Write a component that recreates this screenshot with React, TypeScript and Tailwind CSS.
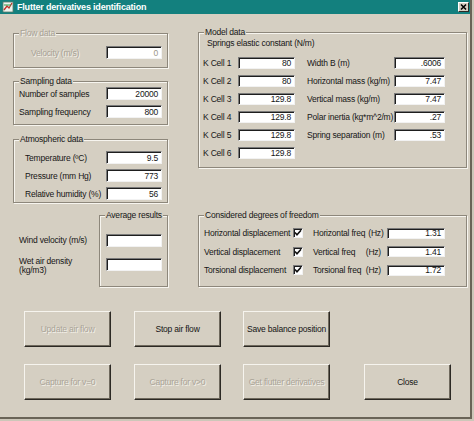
import clsx from "clsx";

function Field({ v, className, dim }: { v?: string; className: string; dim?: boolean }) {
  return (
    <div
      className={clsx(
        "shrink-0 bg-white border border-t-[#7a7a7a] border-l-[#7a7a7a] border-b-[#f2f2f2] border-r-[#f2f2f2] shadow-[inset_1px_1px_0_#1e1e1e] flex items-center justify-end pr-[3px]",
        dim ? "text-[#9c978b]" : "text-[#161616]",
        className
      )}
    >
      {v}
    </div>
  );
}

function Btn({ label, dim, className }: { label: string; dim?: boolean; className?: string }) {
  return (
    <div
      className={clsx(
        "w-[87px] h-[36px] shrink-0 whitespace-nowrap border border-t-[#f6f4ee] border-l-[#f6f4ee] border-b-[#2c2924] border-r-[#2c2924] shadow-[inset_-1px_-1px_0_#6f695d] flex items-center justify-center",
        dim ? "text-[#aaa498] [text-shadow:1px_1px_0_#f4f1ea]" : "text-[#141414]",
        className
      )}
    >
      {label}
    </div>
  );
}

function Check() {
  return (
    <div className="w-[10px] h-[10px] shrink-0 bg-white border border-t-[#7a7a7a] border-l-[#7a7a7a] border-b-[#f2f2f2] border-r-[#f2f2f2] shadow-[inset_1px_1px_0_#1e1e1e] flex items-center justify-center">
      <svg width="8" height="8" viewBox="0 0 8 8">
        <path d="M1 3.5 L3 5.8 L7 1.2" fill="none" stroke="#111" strokeWidth="1.6" />
      </svg>
    </div>
  );
}

const box =
  "border border-[#8d877b] shadow-[inset_1px_1px_0_#f7f5ef,1px_1px_0_#f7f5ef] shrink-0";
const legend = "ml-[5px] px-[1px] leading-[10px] bg-[#d5cfc2] whitespace-nowrap";

const kcells = ["80", "80", "129.8", "129.8", "129.8", "129.8"];
const model = [
  ["Width B (m)", ".6006"],
  ["Horizontal mass (kg/m)", "7.47"],
  ["Vertical mass (kg/m)", "7.47"],
  ["Polar inertia (kg*m^2/m)", ".27"],
  ["Spring separation (m)", ".53"],
];
const dofs = [
  ["Horizontal displacement", "Horizontal freq", "1.31"],
  ["Vertical displacement", "Vertical freq", "1.41"],
  ["Torsional displacement", "Torsional freq", "1.72"],
];

export default function App() {
  return (
    <div className="w-[474px] h-[421px] bg-[#cdc7b9] overflow-hidden font-['Liberation_Sans',Arial,sans-serif] text-[8.5px] tracking-[-0.2px] leading-[10px] text-[#161616]">
      <div className="w-[472px] h-[419px] border-r-2 border-b-2 border-[#6a6457] bg-[#d5cfc2] flex flex-col">
        {/* Title bar */}
        <div className="h-[14px] bg-[#13807e] flex items-center shrink-0">
          <svg width="12" height="12" viewBox="0 0 12 12" className="ml-[2px]">
            <rect x="1" y="1" width="10" height="10" fill="#eef4ee" stroke="#5a7a6a" strokeWidth="0.8" />
            <path d="M2 9 L5 5 L7 7 L10 2" fill="none" stroke="#c0302a" strokeWidth="1.3" />
            <path d="M2 4 L9 4" stroke="#2f9a4a" strokeWidth="1" />
          </svg>
          <span className="ml-[3px] text-white font-bold text-[9px] tracking-[-0.2px]">
            Flutter derivatives identification
          </span>
          <div className="ml-auto mr-[1px] w-[11px] h-[10px] bg-[#d5cfc2] border border-t-white border-l-white border-b-[#2c2924] border-r-[#2c2924] flex items-center justify-center">
            <svg width="7" height="6" viewBox="0 0 7 6">
              <path d="M1 0.5 L6 5.5 M6 0.5 L1 5.5" stroke="#000" strokeWidth="1.5" />
            </svg>
          </div>
        </div>

        {/* Row A */}
        <div className="flex mt-[13px]">
          <div className="ml-[13px] w-[155px] flex flex-col">
            <fieldset className={clsx(box, "mt-[1px] h-[40px]")}>
              <legend className={clsx(legend, "text-[#a7a195] [text-shadow:1px_1px_0_#f4f1ea]")}>Flow data</legend>
              <div className="flex items-center pl-[17px] mt-[8px]">
                <span className="w-[75px] whitespace-nowrap text-[#a7a195] [text-shadow:1px_1px_0_#f4f1ea]">Velocity (m/s)</span>
                <Field v="0" dim className="w-[56px] h-[13px]" />
              </div>
            </fieldset>

            <fieldset className={clsx(box, "mt-[8px] h-[49px]")}>
              <legend className={legend}>Sampling data</legend>
              <div className="flex items-center pl-[5px] mt-[1px]">
                <span className="w-[87px] whitespace-nowrap">Number of samples</span>
                <Field v="20000" className="w-[56px] h-[13px]" />
              </div>
              <div className="flex items-center pl-[5px] mt-[5px]">
                <span className="w-[87px] whitespace-nowrap">Sampling frequency</span>
                <Field v="800" className="w-[56px] h-[13px]" />
              </div>
            </fieldset>

            <fieldset className={clsx(box, "mt-[9px] h-[69px]")}>
              <legend className={legend}>Atmospheric data</legend>
              {[
                ["Temperature (ºC)", "9.5"],
                ["Pressure (mm Hg)", "773"],
                ["Relative humidity (%)", "56"],
              ].map(([l, v], i) => (
                <div key={l} className={clsx("flex items-center pl-[11px]", i === 0 ? "mt-[7px]" : "mt-[5px]")}>
                  <span className="w-[81px] whitespace-nowrap">{l}</span>
                  <Field v={v} className="w-[56px] h-[13px]" />
                </div>
              ))}
            </fieldset>
          </div>

          <fieldset className={clsx(box, "ml-[30px] w-[269px] h-[141px]")}>
            <legend className={legend}>Model data</legend>
            <div className="pl-[8px] mt-[1px]">Springs elastic constant (N/m)</div>
            <div className="flex flex-col gap-[6px] mt-[9px]">
              {kcells.map((k, i) => (
                <div key={i} className="flex items-center pl-[4px] h-[12px] whitespace-nowrap">
                  <span className="w-[35px]">K Cell {i + 1}</span>
                  <Field v={k} className="w-[57px] h-[12px]" />
                  {model[i] && (
                    <>
                      <span className="ml-[12px] w-[87px]">{model[i][0]}</span>
                      <Field v={model[i][1]} className="w-[51px] h-[12px]" />
                    </>
                  )}
                </div>
              ))}
            </div>
          </fieldset>
        </div>

        {/* Row B */}
        <div className="flex mt-[7px]">
          <div className="ml-[13px] w-[86px] pl-[6px] flex flex-col">
            <div className="mt-[25px] whitespace-nowrap">Wind velocity (m/s)</div>
            <div className="mt-[12px] leading-[9px]">
              Wet air density
              <br />
              (kg/m3)
            </div>
          </div>
          <fieldset className={clsx(box, "w-[69px] h-[77px]")}>
            <legend className={legend}>Average results</legend>
            <div className="pl-[6px] mt-[14px] flex flex-col gap-[11px]">
              <Field className="w-[56px] h-[13px]" />
              <Field className="w-[56px] h-[13px]" />
            </div>
          </fieldset>

          <fieldset className={clsx(box, "ml-[30px] w-[269px] h-[77px]")}>
            <legend className={legend}>Considered degrees of freedom</legend>
            <div className="mt-[4px]">
              {dofs.map(([d, f, v]) => (
                <div key={d} className="flex items-center h-[18.5px] pl-[5px] whitespace-nowrap">
                  <span className="w-[89px]">{d}</span>
                  <Check />
                  <span className="ml-[10px] w-[68px] flex justify-between gap-[3px]">
                    <span>{f}</span>
                    <span>(Hz)</span>
                  </span>
                  <Field v={v} className="ml-[6px] w-[58px] h-[11px]" />
                </div>
              ))}
            </div>
          </fieldset>
        </div>

        {/* Buttons */}
        <div className="flex mt-[24px] pl-[24px]">
          <Btn label="Update air flow" dim />
          <Btn label="Stop air flow" className="ml-[23px]" />
          <Btn label="Save balance position" className="ml-[22px]" />
        </div>
        <div className="flex mt-[17px] pl-[24px]">
          <Btn label="Capture for v=0" dim />
          <Btn label="Capture for v>0" dim className="ml-[23px]" />
          <Btn label="Get flutter derivatives" dim className="ml-[22px]" />
          <Btn label="Close" className="ml-[34px]" />
        </div>
      </div>
    </div>
  );
}
